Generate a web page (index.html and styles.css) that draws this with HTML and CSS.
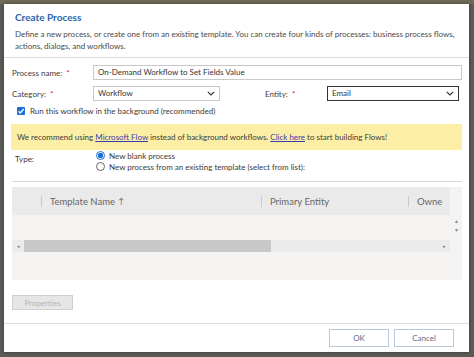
FILE: index.html
```html
<!DOCTYPE html>
<html lang="en">
<head>
  <meta charset="UTF-8" />
  <title>Create Process</title>
  <link rel="stylesheet" href="styles.css">
</head>
<body>
  <div class="screen">
    <div class="dialog">
      <!-- Header -->
      <div class="dialog-head">
        <h1 class="dialog-title">Create Process</h1>
        <p class="dialog-desc">Define a new process, or create one from an existing template. You can create four kinds of processes: business process flows,<br>actions, dialogs, and workflows.</p>
      </div>

      <!-- Form -->
      <div class="dialog-body">
        <div class="field-row">
          <label class="field-label">Process name: <span class="req">*</span></label>
          <div class="text-input name-input">On-Demand Workflow to Set Fields Value</div>
        </div>

        <div class="field-row">
          <label class="field-label">Category: <span class="req">*</span></label>
          <div class="select category-select">
            <span>Workflow</span>
            <svg class="chevron" width="8" height="5" viewBox="0 0 8 5"><path d="M0.8 0.8 L4 4 L7.2 0.8" fill="none" stroke="#333" stroke-width="1.2"/></svg>
          </div>
          <label class="field-label entity-label">Entity: <span class="req">*</span></label>
          <div class="select entity-select">
            <span>Email</span>
            <svg class="chevron" width="8" height="5" viewBox="0 0 8 5"><path d="M0.8 0.8 L4 4 L7.2 0.8" fill="none" stroke="#333" stroke-width="1.2"/></svg>
          </div>
        </div>

        <div class="check-row">
          <span class="checkbox">
            <svg width="8" height="8" viewBox="0 0 8 8"><path d="M1.5 4.2 L3.3 6 L6.6 2" fill="none" stroke="#fff" stroke-width="1.3"/></svg>
          </span>
          <span>Run this workflow in the background (recommended)</span>
        </div>

        <div class="banner">
          We recommend using <a href="#">Microsoft Flow</a> instead of background workflows. <a href="#">Click here</a> to start building Flows!
        </div>

        <div class="type-row">
          <span class="type-label">Type:</span>
          <div class="radio-list">
            <div class="radio-item"><span class="radio radio-on"></span>New blank process</div>
            <div class="radio-item"><span class="radio"></span>New process from an existing template (select from list):</div>
          </div>
        </div>

        <div class="divider"></div>

        <!-- Template grid -->
        <div class="grid">
          <div class="grid-main">
            <div class="grid-head">
              <div class="col col-name"><span class="col-sep"></span>Template Name <span class="sort">&#8593;</span></div>
              <div class="col col-entity"><span class="col-sep"></span>Primary Entity</div>
              <div class="col col-owner"><span class="col-sep"></span>Owne</div>
            </div>
            <div class="grid-rows"></div>
            <div class="hscroll">
              <span class="arrow">&#9666;</span>
              <div class="hscroll-track"><div class="hscroll-thumb"></div></div>
              <span class="arrow">&#9656;</span>
            </div>
          </div>
          <div class="vscroll">
            <span class="varrow">&#9652;</span>
            <span class="varrow">&#9662;</span>
          </div>
        </div>

        <button class="btn-props" disabled>Properties</button>
      </div>

      <!-- Footer -->
      <div class="dialog-foot">
        <button class="btn-foot">OK</button>
        <button class="btn-foot">Cancel</button>
      </div>
    </div>
  </div>
</body>
</html>
```

FILE: styles.css
```css
body {
  margin: 0;
  font-family: 'Lato', 'Open Sans', sans-serif;
  color: #3a3a3a;
  background: #55554f;
}

.screen {
  width: 474px;
  height: 357px;
  padding: 4px 5px 5px 4px;
  box-sizing: border-box;
  background: linear-gradient(180deg, #6e6b58 0, #6e6b58 4px, #5a5a57 4px);
}

/* Dialog box */
.dialog {
  width: 465px;
  height: 348px;
  background: #fff;
  display: flex;
  flex-direction: column;
  box-shadow: 0 0 3px rgba(0, 0, 0, 0.4);
}

.dialog-head {
  padding: 6px 11px 0;
  height: 47px;
  border-bottom: 1px solid #dcdcdc;
}

.dialog-title {
  margin: 0;
  font-size: 10px;
  font-weight: 700;
  color: #2b64ad;
  line-height: 14px;
}

.dialog-desc {
  margin: 4px 0 0;
  font-size: 8px;
  line-height: 12px;
  color: #4a4a4a;
}

.dialog-body {
  flex: 1;
  padding: 5px 7px 0 8px;
  font-size: 8px;
}

/* Fields */
.field-row {
  display: flex;
  align-items: center;
  height: 19px;
  margin-bottom: 2px;
}

.field-label {
  width: 81px;
  flex-shrink: 0;
  white-space: nowrap;
}

.req {
  color: #d22;
  margin-left: 2px;
}

.text-input,
.select {
  flex-shrink: 0;
  height: 13px;
  border: 1px solid #c8c8c8;
  padding: 0 4px;
  line-height: 13px;
  color: #333;
  box-sizing: content-box;
}

.name-input {
  width: 359px;
}

.select {
  display: flex;
  align-items: center;
  justify-content: space-between;
}

.category-select {
  width: 117px;
}

.entity-label {
  width: 62px;
  margin-left: 45px;
}

.entity-select {
  width: 122px;
  border-color: #333;
}

.check-row {
  display: flex;
  align-items: center;
  gap: 5px;
  height: 12px;
  padding-left: 5px;
}

.checkbox {
  width: 8px;
  height: 8px;
  background: #1a6fd6;
  border-radius: 1px;
  display: flex;
}

/* Yellow notice */
.banner {
  margin-top: 7px;
  height: 26px;
  line-height: 26px;
  padding: 0 6px;
  background: #fcefa5;
  margin-left: -1px;
}

.banner a {
  color: #3b3bb0;
}

.type-row {
  display: flex;
  padding: 0 0 0 3px;
}

.type-label {
  width: 81px;
  padding-top: 4px;
}

.radio-list {
  display: flex;
  flex-direction: column;
}

.radio-item {
  display: flex;
  align-items: center;
  gap: 4px;
  height: 11px;
}

.radio {
  width: 7px;
  height: 7px;
  border: 1px solid #666;
  border-radius: 50%;
  box-sizing: content-box;
}

.radio-on {
  border-color: #1a6fd6;
  background: radial-gradient(circle, #1a6fd6 0 2.5px, #fff 3px);
}

.divider {
  margin-top: 9px;
  border-top: 1px solid #d8d8d8;
}

/* Grid */
.grid {
  margin-top: 5px;
  height: 93px;
  background: #f4f3f2;
  display: flex;
  width: 450px;
}

.grid-main {
  flex: 1;
  display: flex;
  flex-direction: column;
  min-width: 0;
}

.grid-head {
  display: flex;
  height: 28px;
  background: #ebeaea;
  font-size: 9.5px;
  color: #666;
  overflow: hidden;
  white-space: nowrap;
}

.col {
  display: flex;
  align-items: center;
}

.col-sep {
  width: 1px;
  height: 11px;
  background: #c8c8c8;
  margin-right: 8px;
}

.col-name {
  padding-left: 29px;
  width: 220px;
}

.col-entity {
  width: 147px;
}

.col-owner {
  flex: 1;
}

.sort {
  margin-left: 3px;
  font-size: 8px;
}

.grid-rows {
  height: 25px;
}

.hscroll {
  display: flex;
  align-items: center;
  height: 12px;
  background: #ebebeb;
  font-size: 5px;
  color: #777;
}

.arrow {
  width: 12px;
  text-align: center;
}

.hscroll-track {
  flex: 1;
  height: 100%;
}

.hscroll-thumb {
  width: 247px;
  height: 100%;
  background: #c8c8c8;
}

.vscroll {
  width: 12px;
  display: flex;
  flex-direction: column;
  padding-top: 30px;
  gap: 2px;
  font-size: 6px;
  color: #888;
  align-items: center;
}

.btn-props {
  display: block;
  margin-top: 15px;
  width: 61px;
  height: 15px;
  padding: 0;
  font-family: inherit;
  font-size: 8px;
  color: #b5b5b5;
  background: #e6e6e6;
  border: 1px solid #d0d0d0;
}

/* Footer buttons */
.dialog-foot {
  height: 28px;
  border-top: 1px solid #dcdcdc;
  display: flex;
  justify-content: flex-end;
  align-items: center;
  gap: 5px;
  padding-right: 15px;
}

.btn-foot {
  width: 60px;
  height: 18px;
  padding: 0;
  background: #fff;
  border: 1px solid #b9c8dc;
  font-family: inherit;
  font-size: 8px;
  color: #5a6d8c;
}
```
